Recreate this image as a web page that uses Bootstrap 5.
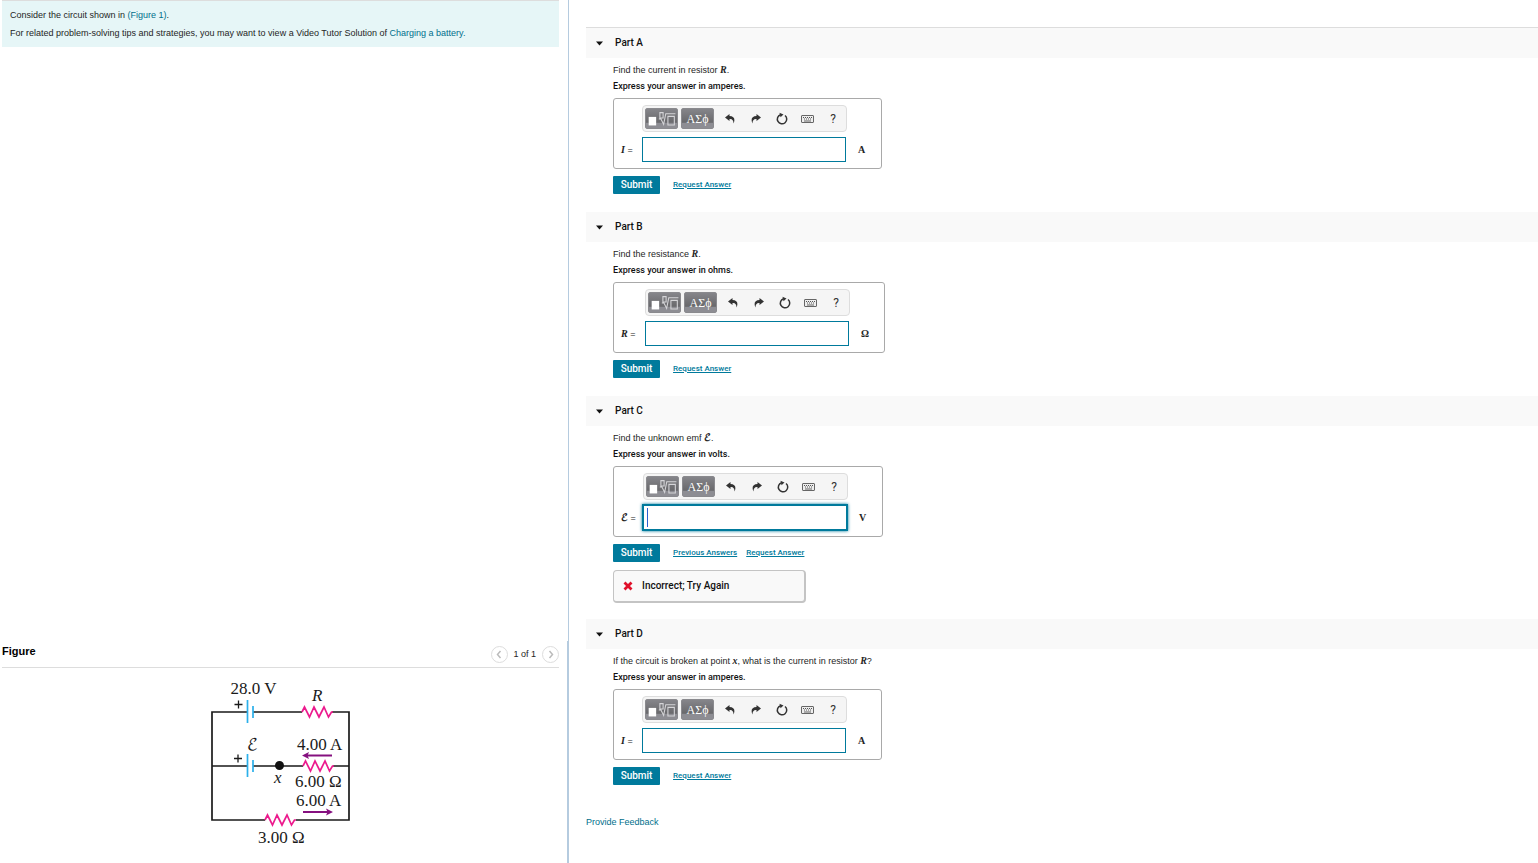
<!DOCTYPE html>
<html lang="en">
<head>
<meta charset="utf-8">
<meta name="viewport" content="width=device-width, initial-scale=1">
<title>Charging a battery</title>
<link href="https://cdn.jsdelivr.net/npm/bootstrap@5.3.0/dist/css/bootstrap.min.css" rel="stylesheet">
<style>
  :root { --teal: #007a9c; --rule: #ddd; }
  body { font-family: "Liberation Sans", Arial, sans-serif; font-size: 9px; line-height: 16px; color: #252525; }
  a { color: #006f8c; text-decoration: none; }
  .pane-left { flex: 0 0 37%; border-right: 1px solid #b5cbdf; }
  .intro { margin: 0 9px 0 2px; padding: 5px 8px; background: #e6f6f7; border-top: 1px solid var(--rule); line-height: 18px; }
  .figure-pane { border-right: 1px solid #b5cbdf; padding: 0 8px 11px 2px; }
  .figure-head { height: 27px; margin-bottom: 4px; border-bottom: 1px solid var(--rule); }
  .figure-head h2 { font-size: 11px; line-height: 20px; font-weight: 700; color: #000; }
  .pager { gap: 6px; }
  .pager-btn { width: 17px; height: 17px; border: 1px solid #ddd; border-radius: 50%; background: #fff; }
  .circuit { width: 160px; height: 180px; font-family: "Liberation Serif", serif; font-size: 17px; }
  .pane-right { padding: 27px 0 0 17px; min-width: 0; }
  .part-head { height: 30px; padding-left: 9px; gap: 11px; background: #f9f9f9; font-size: 10px; }
  .part:first-child .part-head { height: 31px; border-top: 1px solid var(--rule); }
  .part-head h3, .instr, .result { font-family: Roboto, sans-serif; font-weight: 500; color: #111; }
  .part-head h3 { font-size: 10px; line-height: 16px; }
  .part-body { padding: 4px 0 16px 27px; }
  .instr { line-height: 17px; font-size: 9px; }
  .math { font-family: "Liberation Serif", serif; font-style: italic; font-weight: 700; font-size: 10px; }
  .script-e { font-family: "DejaVu Math TeX Gyre", "DejaVu Serif", serif; font-size: 10px; }
  .answer .script-e, p .script-e { font-weight: 700; line-height: 1; }
  .answer { width: fit-content; height: 71px; margin: 3px 0 7px; padding: 6px 0 6px 7px; border: 1px solid #a9a9a9; border-radius: 3px; display: grid; grid-template-columns: auto 204px 35px; grid-template-rows: 27px 25px; row-gap: 5px; align-items: center; }
  .tools { grid-column: 2; width: 205px; height: 27px; padding-left: 2px; border: 1px solid var(--rule); border-radius: 4px; background: #f5f5f5; }
  .tool-dark { width: 33px; height: 21px; margin-right: 3px; border: 1px solid #8a8a8e; border-radius: 2px; background: linear-gradient(#85858a, #69696c 70%, #8d8d93 75%); color: #fff; font-family: "Liberation Serif", serif; font-size: 12px; line-height: 18px; }
  .tool { flex: 1; height: 21px; border: 0; padding: 0; background: none; color: #333; font-family: Roboto, sans-serif; font-size: 12px; line-height: 20px; }
  .answer label { grid-column: 1; color: #222; white-space: nowrap; padding-right: 8px; }
  .answer input { width: 204px; height: 25px; border: 1px solid var(--teal); border-radius: 0; padding: 0 4px; }
  .answer input.is-active { outline: 1px solid var(--teal); box-shadow: 0 0 3px 1px var(--teal); background: linear-gradient(#2b5fd0, #2b5fd0) 3px 2px / 1px 19px no-repeat; }
  .lbl-i { width: 21px; } .lbl-r { width: 24px; } .lbl-e { width: 22px; }
  .unit { padding-left: 12px; font-family: "Liberation Serif", serif; font-weight: 700; font-size: 10px; }
  .actions { height: 18px; margin-bottom: 2px; }
  .submit { width: 47px; height: 18px; margin-right: 13px; padding: 0; border: 0; border-radius: 1px; background: var(--teal); color: #fff; font-family: Roboto, sans-serif; font-weight: 500; font-size: 10px; line-height: 18px; }
  .actions a { font-family: Roboto, sans-serif; font-weight: 500; font-size: 8px; color: var(--teal); text-decoration: underline; margin-right: 9px; }
  .result { width: 193px; height: 33px; margin-top: 8px; padding-left: 9px; gap: 9px; border: 1px solid #c4c4c4; border-right-width: 2px; border-bottom-width: 2px; border-radius: 4px; background: #f9f9f9; font-size: 10px; }
  .feedback-link { font-size: 9px; margin-top: 11px; }
</style>
</head>
<body>
<svg class="d-none" xmlns="http://www.w3.org/2000/svg">
  <symbol id="i-tpl" viewBox="0 0 29 17"><path d="M2.500 7h7v8h-7z" fill="#fff"/><path d="M13 3h3v5h-3zM12 9h2l2.500 5 2-10h9M20.500 6.500h6v8h-6z" fill="none" stroke="#d5d5d8"/></symbol>
  <symbol id="i-undo" viewBox="0 0 12 12"><path d="M5.500 1 1 4.500l4.500 3.500V6q4-.5 4 4.500 3-7-4-7.500z" fill="#333"/></symbol>
  <symbol id="i-redo" viewBox="0 0 12 12"><path d="m6.500 1 4.500 3.500L6.500 8V6q-4-.5-4 4.500-3-7 4-7.500z" fill="#333"/></symbol>
  <symbol id="i-reset" viewBox="0 0 14 14"><path d="M10 3.500A4.700 4.700 0 1 1 5.500 2.700" fill="none" stroke="#333" stroke-width="1.500"/><path d="M4.500.7 8.500 2.500 5.500 5.300z" fill="#333"/></symbol>
  <symbol id="i-keys" viewBox="0 0 15 10"><rect x="1.500" y="1.500" width="12" height="7" rx=".5" fill="#eee" stroke="#666"/><path d="M3 3.500h9M4 5h8" stroke="#555" stroke-dasharray="1 1"/><path d="M4 7h7" stroke="#666"/></symbol>
  <symbol id="i-caret" viewBox="0 0 8 5"><path d="M.5.500h7L4 4.500z" fill="#111"/></symbol>
</svg>

<div class="d-flex min-vh-100">
  <aside class="pane-left d-flex flex-column justify-content-between">
    <div class="intro">
      <p class="mb-0">Consider the circuit shown in <a href="#figure">(Figure 1)</a>.</p>
      <p class="mb-0">For related problem-solving tips and strategies, you may want to view a Video Tutor Solution of <a href="#">Charging a battery.</a></p>
    </div>
    <section class="figure-pane" id="figure">
      <div class="figure-head d-flex justify-content-between">
        <h2 class="mb-0">Figure</h2>
        <div class="pager d-flex align-items-center">
          <button class="pager-btn p-0 d-flex align-items-center justify-content-center" type="button" aria-label="Previous figure"><svg width="6" height="9" viewBox="0 0 6 9"><path d="M4.500 1 1.500 4.500l3 3.500" fill="none" stroke="#bbb" stroke-width="1.500"/></svg></button>
          <span>1 of 1</span>
          <button class="pager-btn p-0 d-flex align-items-center justify-content-center" type="button" aria-label="Next figure"><svg width="6" height="9" viewBox="0 0 6 9"><path d="m1.500 1 3 3.500-3 3.500" fill="none" stroke="#bbb" stroke-width="1.500"/></svg></button>
        </div>
      </div>
      <div class="text-center">
        <svg class="circuit" viewBox="201 672 160 180" role="img" aria-label="Circuit with two batteries and three resistors">
          <g fill="none" stroke="#1a1a1a" stroke-width="1.700">
            <path d="M247 712H212V820H265M253 712H302M332 712H349V820H296M212 766H247M253 766H303M333 766H349"/>
          </g>
          <g fill="none" stroke="#ec1a8d" stroke-width="1.700">
            <path id="zig" d="M302 712l2.500-5 5 10 4.500-10 5 10 5-10 4.500 10 3-5h1.500"/>
            <use href="#zig" x="1" y="54"/>
            <use href="#zig" x="-37" y="108"/>
          </g>
          <g stroke="#2bb0ea" stroke-width="1.700"><path d="M247.500 700v23M253 706v12M247.500 754v23M253 760v12"/></g>
          <path d="M234.500 704.500h8M238.500 700.500v8M234 758.500h8M238 754.500v8" stroke="#1a1a1a" stroke-width="1.300"/>
          <circle cx="279.500" cy="765.500" r="4.500" fill="#111"/>
          <g stroke="#85107f" fill="#85107f"><path d="M332 755.500H307M303 812H328" stroke-width="2"/><path d="m302 755.500 7-3.500-1.500 3.500 1.500 3.500zM333 812l-7-3.500 1.500 3.500-1.500 3.500z" stroke="none"/></g>
          <g fill="#1a1a1a">
            <text x="230.500" y="694">28.0 V</text>
            <text x="312" y="701" font-style="italic">R</text>
            <text x="247" y="750" class="script-e" style="font-size:16px">ℰ</text>
            <text x="297" y="750">4.00 A</text>
            <text x="274" y="783" font-style="italic">x</text>
            <text x="295" y="787">6.00 Ω</text>
            <text x="296" y="806">6.00 A</text>
            <text x="258" y="843">3.00 Ω</text>
          </g>
        </svg>
      </div>
    </section>
  </aside>

  <main class="pane-right flex-grow-1">
    <section class="part">
      <div class="part-head d-flex align-items-center"><svg width="9" height="5"><use href="#i-caret"/></svg><h3 class="mb-0">Part A</h3></div>
      <div class="part-body">
        <p class="mb-0">Find the current in resistor <span class="math">R</span>.</p>
        <p class="instr mb-0">Express your answer in amperes.</p>
        <div class="answer">
          <div class="tools d-flex align-items-center">
            <button class="tool-dark p-0 d-flex" type="button" aria-label="Templates"><svg width="31" height="19"><use href="#i-tpl"/></svg></button>
            <button class="tool-dark p-0" type="button">ΑΣϕ</button>
            <button class="tool" type="button" aria-label="Undo"><svg width="12" height="12"><use href="#i-undo"/></svg></button>
            <button class="tool" type="button" aria-label="Redo"><svg width="12" height="12"><use href="#i-redo"/></svg></button>
            <button class="tool" type="button" aria-label="Reset"><svg width="14" height="14"><use href="#i-reset"/></svg></button>
            <button class="tool" type="button" aria-label="Keyboard"><svg width="15" height="10"><use href="#i-keys"/></svg></button>
            <button class="tool" type="button">?</button>
          </div>
          <label class="lbl-i" for="ans-a"><span class="math">I</span> =</label><input id="ans-a" type="text"><span class="unit">A</span>
        </div>
        <div class="actions d-flex align-items-center"><button class="submit" type="button">Submit</button><a href="#">Request Answer</a></div>
      </div>
    </section>

    <section class="part">
      <div class="part-head d-flex align-items-center"><svg width="9" height="5"><use href="#i-caret"/></svg><h3 class="mb-0">Part B</h3></div>
      <div class="part-body">
        <p class="mb-0">Find the resistance <span class="math">R</span>.</p>
        <p class="instr mb-0">Express your answer in ohms.</p>
        <div class="answer">
          <div class="tools d-flex align-items-center">
            <button class="tool-dark p-0 d-flex" type="button" aria-label="Templates"><svg width="31" height="19"><use href="#i-tpl"/></svg></button>
            <button class="tool-dark p-0" type="button">ΑΣϕ</button>
            <button class="tool" type="button" aria-label="Undo"><svg width="12" height="12"><use href="#i-undo"/></svg></button>
            <button class="tool" type="button" aria-label="Redo"><svg width="12" height="12"><use href="#i-redo"/></svg></button>
            <button class="tool" type="button" aria-label="Reset"><svg width="14" height="14"><use href="#i-reset"/></svg></button>
            <button class="tool" type="button" aria-label="Keyboard"><svg width="15" height="10"><use href="#i-keys"/></svg></button>
            <button class="tool" type="button">?</button>
          </div>
          <label class="lbl-r" for="ans-b"><span class="math">R</span> =</label><input id="ans-b" type="text"><span class="unit">Ω</span>
        </div>
        <div class="actions d-flex align-items-center"><button class="submit" type="button">Submit</button><a href="#">Request Answer</a></div>
      </div>
    </section>

    <section class="part">
      <div class="part-head d-flex align-items-center"><svg width="9" height="5"><use href="#i-caret"/></svg><h3 class="mb-0">Part C</h3></div>
      <div class="part-body">
        <p class="mb-0">Find the unknown emf <span class="script-e">ℰ</span>.</p>
        <p class="instr mb-0">Express your answer in volts.</p>
        <div class="answer">
          <div class="tools d-flex align-items-center">
            <button class="tool-dark p-0 d-flex" type="button" aria-label="Templates"><svg width="31" height="19"><use href="#i-tpl"/></svg></button>
            <button class="tool-dark p-0" type="button">ΑΣϕ</button>
            <button class="tool" type="button" aria-label="Undo"><svg width="12" height="12"><use href="#i-undo"/></svg></button>
            <button class="tool" type="button" aria-label="Redo"><svg width="12" height="12"><use href="#i-redo"/></svg></button>
            <button class="tool" type="button" aria-label="Reset"><svg width="14" height="14"><use href="#i-reset"/></svg></button>
            <button class="tool" type="button" aria-label="Keyboard"><svg width="15" height="10"><use href="#i-keys"/></svg></button>
            <button class="tool" type="button">?</button>
          </div>
          <label class="lbl-e" for="ans-c"><span class="script-e">ℰ</span> =</label><input id="ans-c" class="is-active" type="text"><span class="unit">V</span>
        </div>
        <div class="actions d-flex align-items-center"><button class="submit" type="button">Submit</button><a href="#">Previous Answers</a><a href="#">Request Answer</a></div>
        <div class="result d-flex align-items-center" role="status">
          <svg width="10" height="10" viewBox="0 0 10 10"><path d="m1.500 1.500 7 7m0-7-7 7" stroke="#e0102a" stroke-width="2.800"/></svg><span>Incorrect; Try Again</span>
        </div>
      </div>
    </section>

    <section class="part">
      <div class="part-head d-flex align-items-center"><svg width="9" height="5"><use href="#i-caret"/></svg><h3 class="mb-0">Part D</h3></div>
      <div class="part-body">
        <p class="mb-0">If the circuit is broken at point <span class="math">x</span>, what is the current in resistor <span class="math">R</span>?</p>
        <p class="instr mb-0">Express your answer in amperes.</p>
        <div class="answer">
          <div class="tools d-flex align-items-center">
            <button class="tool-dark p-0 d-flex" type="button" aria-label="Templates"><svg width="31" height="19"><use href="#i-tpl"/></svg></button>
            <button class="tool-dark p-0" type="button">ΑΣϕ</button>
            <button class="tool" type="button" aria-label="Undo"><svg width="12" height="12"><use href="#i-undo"/></svg></button>
            <button class="tool" type="button" aria-label="Redo"><svg width="12" height="12"><use href="#i-redo"/></svg></button>
            <button class="tool" type="button" aria-label="Reset"><svg width="14" height="14"><use href="#i-reset"/></svg></button>
            <button class="tool" type="button" aria-label="Keyboard"><svg width="15" height="10"><use href="#i-keys"/></svg></button>
            <button class="tool" type="button">?</button>
          </div>
          <label class="lbl-i" for="ans-d"><span class="math">I</span> =</label><input id="ans-d" type="text"><span class="unit">A</span>
        </div>
        <div class="actions d-flex align-items-center"><button class="submit" type="button">Submit</button><a href="#">Request Answer</a></div>
      </div>
    </section>
    <a class="feedback-link d-inline-block" href="#">Provide Feedback</a>
  </main>
</div>
<script src="https://cdn.jsdelivr.net/npm/bootstrap@5.3.0/dist/js/bootstrap.bundle.min.js"></script>
</body>
</html>
